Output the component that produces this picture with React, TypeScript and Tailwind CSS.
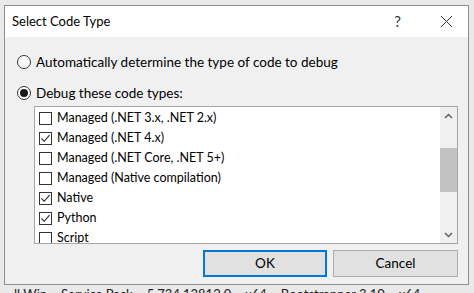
import React from 'react'

const items = [
  { label: 'Managed (.NET 3.x, .NET 2.x)', checked: false },
  { label: 'Managed (.NET 4.x)', checked: true },
  { label: 'Managed (.NET Core, .NET 5+)', checked: false },
  { label: 'Managed (Native compilation)', checked: false },
  { label: 'Native', checked: true },
  { label: 'Python', checked: true },
  { label: 'Script', checked: false },
]

function Radio({ selected }: { selected?: boolean }) {
  return (
    <span className="flex h-[14px] w-[14px] shrink-0 items-center justify-center rounded-full border border-[#333] bg-white">
      {selected && <span className="h-[8px] w-[8px] rounded-full bg-[#1a1a1a]" />}
    </span>
  )
}

function Checkbox({ checked }: { checked?: boolean }) {
  return (
    <span className="flex h-[13px] w-[13px] shrink-0 items-center justify-center border border-[#333] bg-white">
      {checked && (
        <svg width="11" height="11" viewBox="0 0 11 11" fill="none" stroke="#222" strokeWidth="1.1">
          <path d="M1.5 5.5 L4.2 8.3 L9.5 2.2" />
        </svg>
      )}
    </span>
  )
}

export default function App() {
  return (
    <div className="flex h-[293px] w-[474px] flex-col overflow-hidden bg-[#e9e9e9] font-['Lato','Noto_Sans',sans-serif] text-black">
      {/* Dialog */}
      <div className="ml-[4px] mt-[5px] flex h-[280px] w-[465px] shrink-0 flex-col border border-[#8f8f8f] bg-[#f0f0f0]">
        {/* Title bar */}
        <div className="flex h-[31px] items-center bg-white pl-[7px] text-[13px]">
          <span className="flex-1">Select Code Type</span>
          <span className="mr-[39px] text-[15px] text-[#333]">?</span>
          <svg className="mr-[15px]" width="13" height="13" viewBox="0 0 13 13" stroke="#333" strokeWidth="1">
            <path d="M1 1 L12 12 M12 1 L1 12" />
          </svg>
        </div>

        {/* Body */}
        <div className="flex flex-1 flex-col pl-[12px] pr-[10px] pt-[18px] text-[13.5px]">
          <div className="flex h-[14px] items-center gap-[5px]">
            <Radio />
            <span>Automatically determine the type of code to debug</span>
          </div>
          <div className="mt-[17px] flex h-[14px] items-center gap-[5px]">
            <Radio selected />
            <span>Debug these code types:</span>
          </div>

          {/* List */}
          <div className="ml-[17px] mt-[6px] flex h-[138px] border border-[#a6a6a6] bg-white">
            <div className="flex-1 overflow-hidden pl-[4px] pt-[1px] text-[12.5px]">
              {items.map((it) => (
                <div key={it.label} className="flex h-[20px] items-center gap-[5px] whitespace-nowrap">
                  <Checkbox checked={it.checked} />
                  <span>{it.label}</span>
                </div>
              ))}
            </div>
            {/* Scrollbar */}
            <div className="flex w-[17px] flex-col bg-[#f0f0f0]">
              <div className="flex h-[17px] items-center justify-center">
                <svg width="9" height="6" viewBox="0 0 9 6" fill="none" stroke="#606060" strokeWidth="1.5">
                  <path d="M1 5 L4.5 1.5 L8 5" />
                </svg>
              </div>
              <div className="mt-[24px] h-[44px] bg-[#c2c2c2]" />
              <div className="flex-1" />
              <div className="flex h-[17px] items-center justify-center">
                <svg width="9" height="6" viewBox="0 0 9 6" fill="none" stroke="#606060" strokeWidth="1.5">
                  <path d="M1 1 L4.5 4.5 L8 1" />
                </svg>
              </div>
            </div>
          </div>

          {/* Buttons */}
          <div className="mt-[6px] flex justify-end gap-[6px]">
            <button className="flex h-[27px] w-[124px] items-center justify-center border-2 border-[#0078d7] bg-[#e1e1e1] text-[13.5px]">
              OK
            </button>
            <button className="flex h-[27px] w-[125px] items-center justify-center border border-[#adadad] bg-[#e1e1e1] text-[13.5px]">
              Cancel
            </button>
          </div>
        </div>
      </div>

      {/* Background text peeking under the dialog */}
      <div className="mt-[1px] flex gap-[14px] whitespace-nowrap pl-[14px] text-[13px] leading-[16px] text-[#222]">
        <span>ll Win</span>
        <span>Service Pack</span>
        <span>5.734.12812.0</span>
        <span>x64</span>
        <span>Bootstrapper 3.10</span>
        <span>x64</span>
      </div>
    </div>
  )
}
